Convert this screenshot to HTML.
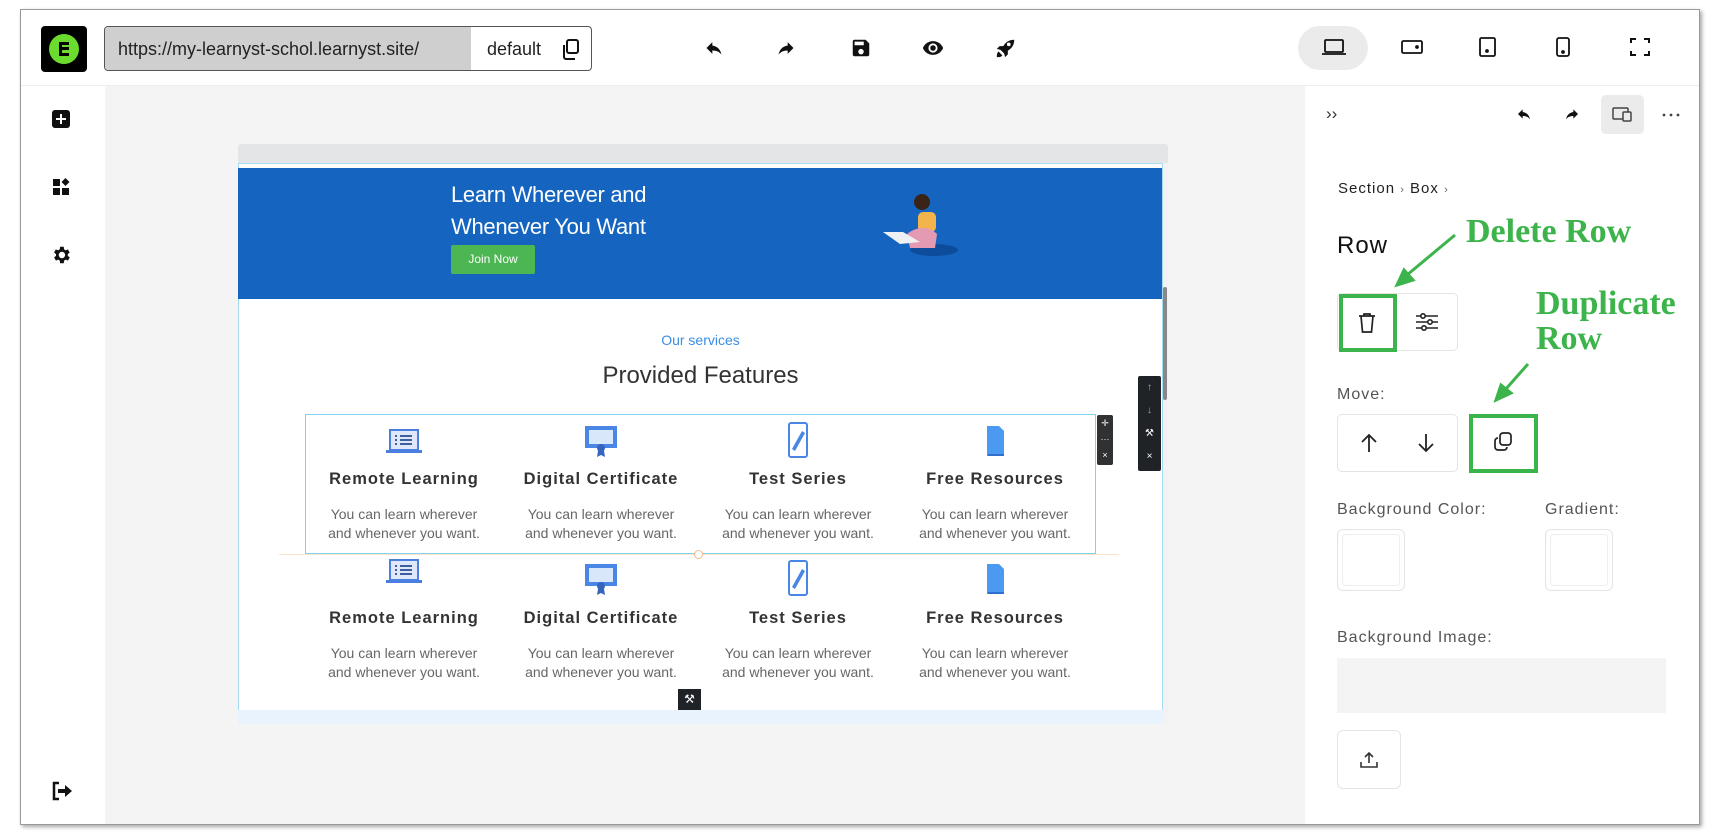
<!DOCTYPE html>
<html><head><meta charset="utf-8"><style>
*{box-sizing:border-box;margin:0;padding:0}
body{width:1720px;height:834px;background:#fff;font-family:"Liberation Sans",sans-serif;position:relative;overflow:hidden}
.a{position:absolute}
.frame{left:20px;top:9px;width:1680px;height:816px;border:1px solid #999;box-shadow:2px 2px 4px rgba(0,0,0,.35);overflow:hidden;background:#fff}
.col{position:absolute;width:190px;text-align:center}
.col .t{font-weight:bold;font-size:16.5px;color:#333;letter-spacing:1px}
.col .d{font-size:14px;color:#666;line-height:19px}
.g{color:#3cb44b;font-family:"Liberation Serif",serif;font-weight:bold;font-size:34px;line-height:35px}
.lbl{font-size:16px;color:#555;letter-spacing:1px}
</style></head><body>
<div class="a frame">
<div class="a" style="left:0;top:75px;width:1680px;height:1px;background:#eee"></div>
<div class="a" style="left:84px;top:76px;width:1200px;height:740px;background:#f4f4f4"></div>
<div class="a" style="left:20px;top:16px;width:46px;height:46px;background:#000;border-radius:4px"></div>
<div class="a" style="left:28px;top:24px;width:30px;height:30px;background:#6bdc2e;border-radius:50%"></div>
<div class="a" style="left:38px;top:32px;width:10px;height:14px;border:3px solid #000;border-right:none"></div>
<div class="a" style="left:41px;top:37px;width:7px;height:3px;background:#000"></div>
<div class="a" style="left:83px;top:16px;width:488px;height:45px;border:1px solid #555;border-radius:4px;overflow:hidden;background:#fff">
<div class="a" style="left:0;top:0;width:366px;height:45px;background:#cfcfcf"></div>
<div class="a" style="left:13px;top:12px;font-size:18px;color:#222">https://my-learnyst-schol.learnyst.site/</div>
<div class="a" style="left:382px;top:12px;font-size:18px;color:#222">default</div>
<svg class="a" style="left:454px;top:10px" width="22" height="24" viewBox="0 0 22 24" fill="none" stroke="#111" stroke-width="2"><rect x="8" y="3" width="11" height="13" rx="2"/><path d="M5 8v12a2 2 0 0 0 2 2h9"/></svg>
</div>
<svg class="a" style="left:682px;top:28px" width="22" height="20" viewBox="0 0 24 24"><path d="M10 9V5l-7 7 7 7v-4c5 0 8.5 1.6 11 5-1-5-4-10-11-11z" fill="#111"/></svg>
<svg class="a" style="left:754px;top:28px" width="22" height="20" viewBox="0 0 24 24"><path d="M14 9V5l7 7-7 7v-4c-5 0-8.5 1.6-11 5 1-5 4-10 11-11z" fill="#111"/></svg>
<svg class="a" style="left:829px;top:27px" width="22" height="22" viewBox="0 0 24 24"><path d="M17 3H5a2 2 0 0 0-2 2v14a2 2 0 0 0 2 2h14a2 2 0 0 0 2-2V7l-4-4zm-5 16a3 3 0 1 1 0-6 3 3 0 0 1 0 6zm3-10H5V5h10v4z" fill="#111"/></svg>
<svg class="a" style="left:900px;top:27px" width="24" height="22" viewBox="0 0 24 24"><path d="M12 4.5C7 4.5 2.7 7.6 1 12c1.7 4.4 6 7.5 11 7.5s9.3-3.1 11-7.5c-1.7-4.4-6-7.5-11-7.5zM12 17a5 5 0 1 1 0-10 5 5 0 0 1 0 10zm0-8a3 3 0 1 0 0 6 3 3 0 0 0 0-6z" fill="#111"/></svg>
<svg class="a" style="left:974px;top:27px" width="22" height="22" viewBox="0 0 24 24"><path d="M21 3c-5 0-9 2-12 7H5l-3 3 4 1 4 4 1 4 3-3v-4c5-3 7-7 7-12zM15 10a2 2 0 1 1 0-4 2 2 0 0 1 0 4zM4 16c-2 1-2 4-2 6 2 0 5 0 6-2z" fill="#111"/></svg>
<div class="a" style="left:1277px;top:16px;width:70px;height:44px;background:#ebebeb;border-radius:22px"></div>
<svg class="a" style="left:1300px;top:27px" width="26" height="20" viewBox="0 0 26 20" fill="none" stroke="#111" stroke-width="1.8"><rect x="4" y="3" width="18" height="12" rx="1"/><path d="M1 17h24"/></svg>
<svg class="a" style="left:1379px;top:28px" width="24" height="18" viewBox="0 0 24 18" fill="none" stroke="#111" stroke-width="1.8"><rect x="2" y="3" width="20" height="12" rx="1.5"/><circle cx="17" cy="9" r="1" fill="#111"/></svg>
<svg class="a" style="left:1456px;top:26px" width="20" height="22" viewBox="0 0 20 22" fill="none" stroke="#111" stroke-width="1.8"><rect x="3" y="2" width="15" height="18" rx="1.5"/><circle cx="10" cy="15" r="1" fill="#111"/></svg>
<svg class="a" style="left:1533px;top:26px" width="18" height="22" viewBox="0 0 18 22" fill="none" stroke="#111" stroke-width="1.8"><rect x="3" y="2" width="12" height="18" rx="2"/><circle cx="9" cy="16" r="1" fill="#111"/></svg>
<svg class="a" style="left:1608px;top:27px" width="22" height="20" viewBox="0 0 22 20" fill="none" stroke="#111" stroke-width="2"><path d="M2 6V2h5M15 2h5v4M20 14v4h-5M7 18H2v-4"/></svg>
<svg class="a" style="left:30px;top:99px" width="20" height="20" viewBox="0 0 20 20"><rect x="1" y="1" width="18" height="18" rx="3" fill="#111"/><path d="M10 5v10M5 10h10" stroke="#fff" stroke-width="2"/></svg>
<svg class="a" style="left:30px;top:167px" width="20" height="20" viewBox="0 0 20 20" fill="#111"><rect x="2" y="2" width="7" height="7"/><rect x="2" y="11" width="7" height="7"/><rect x="11" y="11" width="7" height="7"/><path d="M14.5 1l4 4-4 4-4-4z"/></svg>
<svg class="a" style="left:29px;top:234px" width="22" height="22" viewBox="0 0 24 24"><path fill="#111" d="M19.4 13a7.5 7.5 0 0 0 0-2l2.1-1.6-2-3.5-2.5 1a7 7 0 0 0-1.7-1L15 3h-4l-.4 2.9a7 7 0 0 0-1.7 1l-2.5-1-2 3.5L6.6 11a7.5 7.5 0 0 0 0 2l-2.1 1.6 2 3.5 2.5-1a7 7 0 0 0 1.7 1l.3 2.9h4l.4-2.9a7 7 0 0 0 1.7-1l2.5 1 2-3.5zM13 15.5a3.5 3.5 0 1 1 0-7 3.5 3.5 0 0 1 0 7z"/></svg>
<svg class="a" style="left:30px;top:771px" width="22" height="20" viewBox="0 0 22 20"><path d="M8 2H3v16h5" stroke="#111" stroke-width="2.5" fill="none"/><path d="M7 8h7V4l7 6-7 6v-4H7z" fill="#111"/></svg>

<div class="a" style="left:217px;top:134px;width:930px;height:19px;background:#e4e5e7;border-radius:3px 3px 0 0"></div>
<div class="a" style="left:217px;top:153px;width:925px;height:561px;background:#fff;border:1px solid #a6dcf3"></div>
<div class="a" style="left:217px;top:700px;width:925px;height:14px;background:#e8f3fd"></div>
<div class="a" style="left:1142px;top:153px;width:5px;height:561px;background:#f2f2f2"></div>
<div class="a" style="left:1142px;top:277px;width:4px;height:113px;background:#888;border-radius:2px"></div>
<div class="a" style="left:217px;top:158px;width:924px;height:131px;background:#1565c0"></div>
<div class="a" style="left:430px;top:169px;font-size:22px;line-height:32px;color:#fff;letter-spacing:-.3px">Learn Wherever and<br>Whenever You Want</div>
<div class="a" style="left:430px;top:235px;width:84px;height:29px;background:#4cb652;border-radius:2px;color:#fff;font-size:12px;text-align:center;line-height:29px">Join Now</div>
<svg class="a" style="left:861px;top:180px" width="80" height="72" viewBox="0 0 80 72"><ellipse cx="52" cy="60" rx="24" ry="6" fill="#0d4c9a"/><circle cx="40" cy="12" r="8" fill="#3a2418"/><rect x="36" y="22" width="18" height="20" rx="5" fill="#f4b44c"/><path d="M25 44c10-8 22-8 30 0l-2 14H28z" fill="#e59ab3"/><path d="M1 42l17 12 20-2-17-10z" fill="#eef0f4"/></svg>

<div class="a" style="left:217px;top:322px;width:925px;text-align:center;font-size:14px;color:#3a8ee6">Our services</div>
<div class="a" style="left:217px;top:352px;width:925px;text-align:center;font-size:24px;color:#333">Provided Features</div>

<div class="a" style="left:284px;top:404px;width:791px;height:140px;border:1.5px solid #7dd3f0"></div>
<div class="a" style="left:258px;top:544px;width:840px;height:1px;background:#fde3cc"></div>
<div class="a" style="left:673px;top:540px;width:9px;height:9px;border:1px solid #f3b98c;border-radius:50%;background:#fff"></div>
<div class="a" style="left:1076px;top:405px;width:16px;height:50px;background:#2f3133;border-radius:2px;color:#fff;font-size:9px;text-align:center;line-height:16px">✛<br>···<br>×</div>
<div class="a" style="left:1117px;top:366px;width:23px;height:95px;background:#1f2328;border-radius:2px;color:#aaa;font-size:10px;text-align:center;line-height:23px">↑<br>↓<br><span style="color:#fff">⚒</span><br><span style="color:#fff">×</span></div>
<div class="a" style="left:657px;top:679px;width:23px;height:21px;background:#1f2328;color:#fff;font-size:12px;text-align:center;line-height:21px">⚒</div>

<div class="col" style="left:288px;top:417px"><svg width="40" height="30" viewBox="0 0 40 30"><rect x="6" y="3" width="28" height="20" fill="#dfe8fb" stroke="#4a7ee0" stroke-width="2"/><path d="M11 9h2M11 13h2M11 17h2M16 9h12M16 13h12M16 17h12" stroke="#3e5e9e" stroke-width="2"/><rect x="2" y="23" width="36" height="3" fill="#4a7ee0"/></svg></div>
<div class="col" style="left:485px;top:414px"><svg width="40" height="34" viewBox="0 0 40 34"><rect x="4" y="2" width="32" height="22" fill="#4a86e6"/><rect x="8" y="6" width="24" height="14" fill="#d9e7fb"/><circle cx="20" cy="24" r="4" fill="#3565bf"/><path d="M17 27l-1 6 4-2 4 2-1-6" fill="#3565bf"/></svg></div>
<div class="col" style="left:682px;top:411px"><svg width="40" height="38" viewBox="0 0 40 38"><rect x="11" y="2" width="18" height="34" rx="2" fill="#fff" stroke="#4a86e6" stroke-width="2"/><path d="M14 28l10-18 3 2-10 18z" fill="#4a86e6"/></svg></div>
<div class="col" style="left:879px;top:414px"><svg width="40" height="34" viewBox="0 0 40 34"><path d="M12 2h12l5 5v25H12z" fill="#4a9af2"/><path d="M13 30h16v2H13z" fill="#2f6fcf"/></svg></div>
<div class="col" style="left:288px;top:547px"><svg width="40" height="30" viewBox="0 0 40 30"><rect x="6" y="3" width="28" height="20" fill="#dfe8fb" stroke="#4a7ee0" stroke-width="2"/><path d="M11 9h2M11 13h2M11 17h2M16 9h12M16 13h12M16 17h12" stroke="#3e5e9e" stroke-width="2"/><rect x="2" y="23" width="36" height="3" fill="#4a7ee0"/></svg></div>
<div class="col" style="left:485px;top:552px"><svg width="40" height="34" viewBox="0 0 40 34"><rect x="4" y="2" width="32" height="22" fill="#4a86e6"/><rect x="8" y="6" width="24" height="14" fill="#d9e7fb"/><circle cx="20" cy="24" r="4" fill="#3565bf"/><path d="M17 27l-1 6 4-2 4 2-1-6" fill="#3565bf"/></svg></div>
<div class="col" style="left:682px;top:549px"><svg width="40" height="38" viewBox="0 0 40 38"><rect x="11" y="2" width="18" height="34" rx="2" fill="#fff" stroke="#4a86e6" stroke-width="2"/><path d="M14 28l10-18 3 2-10 18z" fill="#4a86e6"/></svg></div>
<div class="col" style="left:879px;top:552px"><svg width="40" height="34" viewBox="0 0 40 34"><path d="M12 2h12l5 5v25H12z" fill="#4a9af2"/><path d="M13 30h16v2H13z" fill="#2f6fcf"/></svg></div>

<div class="col" style="left:288px;top:460px"><div class="t">Remote Learning</div><div class="d" style="margin-top:16px">You can learn wherever<br>and whenever you want.</div></div>
<div class="col" style="left:485px;top:460px"><div class="t">Digital Certificate</div><div class="d" style="margin-top:16px">You can learn wherever<br>and whenever you want.</div></div>
<div class="col" style="left:682px;top:460px"><div class="t">Test Series</div><div class="d" style="margin-top:16px">You can learn wherever<br>and whenever you want.</div></div>
<div class="col" style="left:879px;top:460px"><div class="t">Free Resources</div><div class="d" style="margin-top:16px">You can learn wherever<br>and whenever you want.</div></div>
<div class="col" style="left:288px;top:599px"><div class="t">Remote Learning</div><div class="d" style="margin-top:16px">You can learn wherever<br>and whenever you want.</div></div>
<div class="col" style="left:485px;top:599px"><div class="t">Digital Certificate</div><div class="d" style="margin-top:16px">You can learn wherever<br>and whenever you want.</div></div>
<div class="col" style="left:682px;top:599px"><div class="t">Test Series</div><div class="d" style="margin-top:16px">You can learn wherever<br>and whenever you want.</div></div>
<div class="col" style="left:879px;top:599px"><div class="t">Free Resources</div><div class="d" style="margin-top:16px">You can learn wherever<br>and whenever you want.</div></div>

<div class="a" style="left:1305px;top:94px;font-size:17px;color:#333">››</div>
<svg class="a" style="left:1494px;top:96px" width="18" height="16" viewBox="0 0 24 24"><path d="M10 9V5l-7 7 7 7v-4c5 0 8.5 1.6 11 5-1-5-4-10-11-11z" fill="#111"/></svg>
<svg class="a" style="left:1542px;top:96px" width="18" height="16" viewBox="0 0 24 24"><path d="M14 9V5l7 7-7 7v-4c-5 0-8.5 1.6-11 5 1-5 4-10 11-11z" fill="#111"/></svg>
<div class="a" style="left:1580px;top:85px;width:43px;height:39px;background:#ebebeb;border-radius:5px"></div>
<svg class="a" style="left:1591px;top:96px" width="22" height="17" viewBox="0 0 22 17" fill="none" stroke="#444" stroke-width="1.5"><rect x="1" y="2" width="15" height="11" rx="1"/><rect x="11" y="6" width="8" height="9" rx="1" fill="#ebebeb"/></svg>
<svg class="a" style="left:1640px;top:103px" width="20" height="4" viewBox="0 0 20 4" fill="#444"><circle cx="3" cy="2" r="1.4"/><circle cx="10" cy="2" r="1.4"/><circle cx="17" cy="2" r="1.4"/></svg>
<div class="a" style="left:1317px;top:170px;font-size:15px;color:#222;letter-spacing:1px">Section <span style="font-size:11px;color:#666">›</span> Box <span style="font-size:11px;color:#666">›</span></div>
<div class="a" style="left:1316px;top:222px;font-size:24px;color:#111;letter-spacing:1px">Row</div>
<div class="a g" style="left:1445px;top:204px">Delete Row</div>
<div class="a g" style="left:1515px;top:276px">Duplicate<br>Row</div>
<svg class="a" style="left:0;top:0" width="1680" height="816"><g stroke="#3cb44b" stroke-width="3" fill="#3cb44b"><line x1="1434" y1="225" x2="1386" y2="265"/><path d="M1376 275l7-15 9 10z"/><line x1="1507" y1="354" x2="1484" y2="380"/><path d="M1475 390l5-15 10 8z"/></g></svg>
<div class="a" style="left:1316px;top:283px;width:121px;height:58px;border:1px solid #e4e4e4;border-radius:5px"></div>
<div class="a" style="left:1318px;top:284px;width:58px;height:58px;border:4px solid #3cb44b"></div>
<svg class="a" style="left:1336px;top:302px" width="20" height="22" viewBox="0 0 20 22" fill="none" stroke="#222" stroke-width="1.7"><path d="M2 4h16M7 4V2h6v2M4 4l1.5 16h9L16 4"/></svg>
<svg class="a" style="left:1394px;top:302px" width="24" height="20" viewBox="0 0 24 20" fill="none" stroke="#222" stroke-width="1.6"><path d="M1 4h22M1 10h22M1 16h22"/><circle cx="8" cy="4" r="2.2" fill="#fff"/><circle cx="15" cy="10" r="2.2" fill="#fff"/><circle cx="9" cy="16" r="2.2" fill="#fff"/></svg>
<div class="a lbl" style="left:1316px;top:376px">Move:</div>
<div class="a" style="left:1316px;top:404px;width:121px;height:58px;border:1px solid #e4e4e4;border-radius:5px"></div>
<svg class="a" style="left:1338px;top:422px" width="20" height="22" viewBox="0 0 20 22" fill="none" stroke="#222" stroke-width="1.8"><path d="M10 20V3M3 10l7-7 7 7"/></svg>
<svg class="a" style="left:1395px;top:422px" width="20" height="22" viewBox="0 0 20 22" fill="none" stroke="#222" stroke-width="1.8"><path d="M10 2v17M3 12l7 7 7-7"/></svg>
<div class="a" style="left:1448px;top:404px;width:69px;height:59px;border:4px solid #3cb44b"></div>
<svg class="a" style="left:1471px;top:421px" width="22" height="22" viewBox="0 0 22 22" fill="none" stroke="#222" stroke-width="1.7"><rect x="8" y="2" width="11" height="12" rx="3"/><path d="M6 7a3 3 0 0 0-3 3v6a3 3 0 0 0 3 3h6a3 3 0 0 0 3-3"/></svg>
<div class="a lbl" style="left:1316px;top:491px">Background Color:</div>
<div class="a lbl" style="left:1524px;top:491px">Gradient:</div>
<div class="a" style="left:1316px;top:519px;width:68px;height:62px;border:1px solid #e4e4e4;border-radius:6px;padding:4px"><div style="width:100%;height:100%;border:1px solid #eee;border-radius:4px"></div></div>
<div class="a" style="left:1524px;top:519px;width:68px;height:62px;border:1px solid #e4e4e4;border-radius:6px;padding:4px"><div style="width:100%;height:100%;border:1px solid #eee;border-radius:4px"></div></div>
<div class="a lbl" style="left:1316px;top:619px">Background Image:</div>
<div class="a" style="left:1316px;top:648px;width:329px;height:55px;background:#f4f4f4"></div>
<div class="a" style="left:1316px;top:720px;width:64px;height:59px;border:1px solid #e4e4e4;border-radius:6px"></div>
<svg class="a" style="left:1338px;top:741px" width="20" height="18" viewBox="0 0 20 18" fill="none" stroke="#333" stroke-width="1.6"><path d="M10 12V2M6 6l4-4 4 4M2 11v5h16v-5"/></svg>
</div>
</body></html>
